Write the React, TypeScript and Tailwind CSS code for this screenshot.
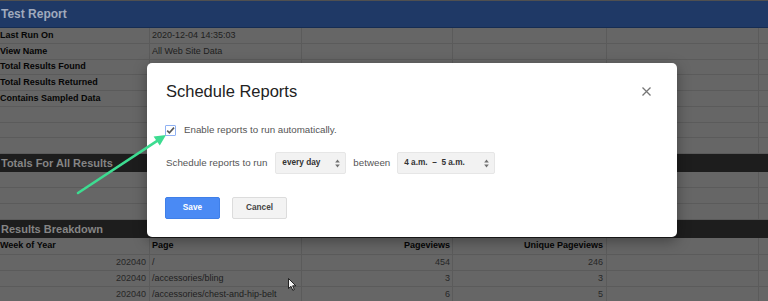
import React from 'react';

const line = 'border-[#5b5b5b]';

function Cell({ w, children, align = 'left', bold = false, color = 'text-[#1e1e1e]', pad = '' }: { w: string; children?: React.ReactNode; align?: 'left' | 'right'; bold?: boolean; color?: string; pad?: string }) {
  return (
    <div
      className={`${w} h-full shrink-0 flex items-center border-r ${line} overflow-hidden whitespace-nowrap text-[9px] ${bold ? 'font-bold text-[#050505]' : color} ${align === 'right' ? 'justify-end' : 'justify-start'} ${pad}`}
    >
      {children}
    </div>
  );
}

function Row({ h, a, b, c, d, aRight = false, bold = false, aBold = false }: { h: string; a?: string; b?: string; c?: string; d?: string; aRight?: boolean; bold?: boolean; aBold?: boolean }) {
  return (
    <div className={`${h} flex border-b ${line}`}>
      <Cell w="w-[150px]" align={aRight ? 'right' : 'left'} bold={(bold || aBold) && !aRight} pad={aRight ? 'pr-[3px]' : 'pl-0'} color={aRight ? 'text-[#262626]' : 'text-[#1e1e1e]'}>
        {a}
      </Cell>
      <Cell w="w-[152px]" bold={bold} pad="pl-[2px]">
        {b}
      </Cell>
      <Cell w="w-[151px]" align="right" bold={bold} pad="pr-[2px]" color="text-[#262626]">
        {c}
      </Cell>
      <Cell w="w-[154px]" align="right" bold={bold} pad="pr-[3px]" color="text-[#262626]">
        {d}
      </Cell>
      <Cell w="w-[152px]" />
      <div className="flex-1" />
    </div>
  );
}

function DarkBar({ children, h }: { children: React.ReactNode; h: string }) {
  return (
    <div className={`${h} bg-[#1d1d1d] flex items-center pl-[1px] text-[11px] font-bold text-[#858585] whitespace-nowrap`}>
      {children}
    </div>
  );
}

function SelectArrows() {
  return (
    <svg width="5" height="9" viewBox="0 0 5 9" className="shrink-0">
      <path d="M2.5 0.5 L4.8 3.5 L0.2 3.5 Z" fill="#6f6f6f" />
      <path d="M2.5 8.5 L4.8 5.5 L0.2 5.5 Z" fill="#6f6f6f" />
    </svg>
  );
}

function Select({ w, children }: { w: string; children: React.ReactNode }) {
  return (
    <div className={`${w} h-[22px] shrink-0 flex items-center justify-between pl-[6px] pr-[5px] bg-[#f2f2f2] border border-[#e6e6e6] rounded-[2px] text-[8.25px] font-bold text-[#333] whitespace-nowrap`}>
      <span>{children}</span>
      <SelectArrows />
    </div>
  );
}

export default function App() {
  return (
    <div className="relative w-[768px] h-[301px] overflow-hidden bg-[#666666] font-['Liberation_Sans',Arial,sans-serif]">
      {/* Spreadsheet (dimmed behind the modal) */}
      <div className="flex flex-col">
        <div className="h-[28px] border-t border-[#505050] border-b border-b-[#162d53] bg-[#1f3966] flex items-center pl-[1px] text-[12px] font-bold text-[#a0aabd]">
          Test Report
        </div>
        <Row h="h-[16px]" a="Last Run On" b="2020-12-04 14:35:03" aBold />
        <Row h="h-[16px]" a="View Name" b="All Web Site Data" aBold />
        <Row h="h-[15px]" a="Total Results Found" aBold />
        <Row h="h-[16px]" a="Total Results Returned" aBold />
        <Row h="h-[16px]" a="Contains Sampled Data" aBold />
        <Row h="h-[16px]" />
        <Row h="h-[15px]" />
        <Row h="h-[16px]" />
        <DarkBar h="h-[18px]">Totals For All Results</DarkBar>
        <Row h="h-[16px]" />
        <Row h="h-[16px]" />
        <Row h="h-[16px]" />
        <DarkBar h="h-[18px]">Results Breakdown</DarkBar>
        <Row h="h-[17px]" a="Week of Year" b="Page" c="Pageviews" d="Unique Pageviews" bold />
        <Row h="h-[16px]" a="202040" b="/" c="454" d="246" aRight />
        <Row h="h-[16px]" a="202040" b="/accessories/bling" c="3" d="3" aRight />
        <Row h="h-[16px]" a="202040" b="/accessories/chest-and-hip-belt" c="6" d="5" aRight />
        <Row h="h-[16px]" />
      </div>

      {/* Dialog */}
      <div className="absolute left-[147px] top-[63px] w-[530px] h-[174px] bg-white rounded-[5px] shadow-[0_4px_14px_rgba(0,0,0,0.35)] pt-[20px] pl-[18px] pr-[26px] flex flex-col">
        <div className="h-[17px] flex items-center justify-between">
          <div className="pl-[1px] text-[16.5px] leading-[17px] text-[#222] whitespace-nowrap">Schedule Reports</div>
          <svg width="9" height="9" viewBox="0 0 9 9">
            <path d="M0.5 0.5 L8.5 8.5 M8.5 0.5 L0.5 8.5" stroke="#767676" strokeWidth="1.3" />
          </svg>
        </div>
        <div className="mt-[25px] h-[11px] flex items-center">
          <div className="w-[11px] h-[11px] shrink-0 border border-[#8fb1f3] bg-white rounded-[1px] relative">
            <svg width="11" height="11" viewBox="0 0 11 11" className="absolute left-[-1px] top-[-1px]">
              <path d="M2.2 5.6 L4.4 7.8 L9 2.6" fill="none" stroke="#555" strokeWidth="1.6" />
            </svg>
          </div>
          <span className="ml-[8px] text-[9.75px] text-[#555] whitespace-nowrap">Enable reports to run automatically.</span>
        </div>
        <div className="mt-[16px] h-[22px] flex items-center">
          <span className="pl-[1px] text-[9.75px] text-[#555] whitespace-nowrap">Schedule reports to run</span>
          <div className="ml-[8px]">
            <Select w="w-[71px]">every day</Select>
          </div>
          <span className="mx-[7px] text-[9.75px] text-[#555] whitespace-nowrap">between</span>
          <Select w="w-[98px]">4 a.m. &nbsp;– &nbsp;5 a.m.</Select>
        </div>
        <div className="mt-[23px] flex gap-[12px]">
          <div className="w-[55px] h-[22px] flex items-center justify-center bg-[#4a8af4] border border-[#3f7fe8] rounded-[2px] text-[8.25px] font-bold text-white">
            Save
          </div>
          <div className="w-[55px] h-[22px] flex items-center justify-center bg-[#f3f3f3] border border-[#dcdcdc] rounded-[2px] text-[8.25px] font-bold text-[#444]">
            Cancel
          </div>
        </div>
      </div>

      {/* Green annotation arrow */}
      <svg className="absolute left-0 top-0 pointer-events-none" width="768" height="301" viewBox="0 0 768 301">
        <line x1="78" y1="193" x2="157.5" y2="140.6" stroke="#3ddc91" strokeWidth="2.6" strokeLinecap="round" />
        <polygon points="166,135 159.8,145.6 153.6,136.6" fill="#3ddc91" />
      </svg>

      {/* Mouse cursor */}
      <svg className="absolute left-[288px] top-[278px] pointer-events-none" width="10" height="14" viewBox="0 0 10 14">
        <path d="M0.5 0.5 L0.5 10.5 L3 8.3 L4.8 12.3 L6.3 11.6 L4.6 7.8 L7.8 7.8 Z" fill="#f2f2f2" stroke="#111" strokeWidth="0.9" strokeLinejoin="round" />
      </svg>
    </div>
  );
}
